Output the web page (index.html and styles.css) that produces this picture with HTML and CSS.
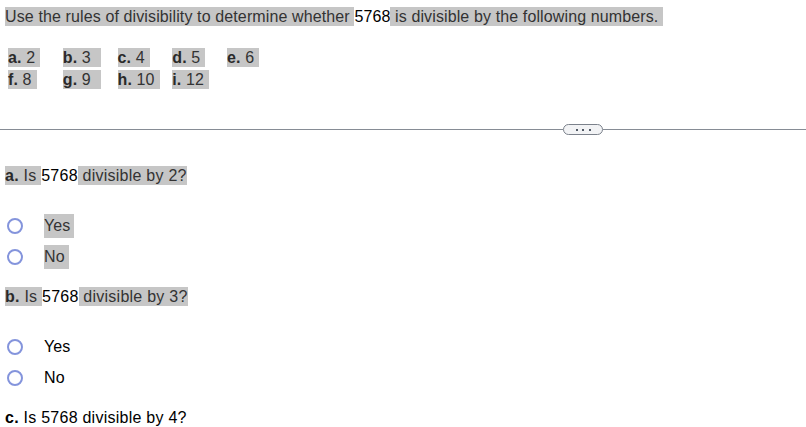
FILE: index.html
```html
<!DOCTYPE html>
<html>
<head>
<meta charset="utf-8">
<link rel="stylesheet" href="styles.css">
</head>
<body>
<div class="page">
  <p class="intro"><span class="hl">Use the rules of divisibility to determine whether </span><span class="num">5768</span><span class="hl end"> is divisible by the following numbers.</span></p>

  <div class="choices">
    <span class="cell"><span class="hl item"><b>a.</b> 2</span></span>
    <span class="cell"><span class="hl item wide"><b>b.</b> 3</span></span>
    <span class="cell"><span class="hl item"><b>c.</b> 4</span></span>
    <span class="cell"><span class="hl item"><b>d.</b> 5</span></span>
    <span class="cell"><span class="hl item"><b>e.</b> 6</span></span>
    <span class="cell"><span class="hl item"><b>f.</b> 8</span></span>
    <span class="cell"><span class="hl item wide"><b>g.</b> 9</span></span>
    <span class="cell"><span class="hl item"><b>h.</b> 10</span></span>
    <span class="cell"><span class="hl item"><b>i.</b> 12</span></span>
  </div>

  <div class="divider">
    <div class="rule"></div>
    <div class="pill"><i></i><i></i><i></i></div>
    <div class="rule rule-right"></div>
  </div>

  <div class="question">
    <p class="qtext"><span class="hl"><b>a.</b> Is </span><span class="num">5768</span><span class="hl"> divisible by 2?</span></p>
    <div class="options">
      <label class="option"><span class="radio"></span><span class="hl opt">Yes</span></label>
      <label class="option"><span class="radio"></span><span class="hl opt">No</span></label>
    </div>
  </div>

  <div class="question">
    <p class="qtext"><span class="hl"><b>b.</b> Is </span><span class="num">5768</span><span class="hl"> divisible by 3?</span></p>
    <div class="options">
      <label class="option"><span class="radio"></span><span class="opt plain">Yes</span></label>
      <label class="option"><span class="radio"></span><span class="opt plain">No</span></label>
    </div>
  </div>

  <div class="question">
    <p class="qtext plaintext"><b>c.</b> Is 5768 divisible by 4?</p>
  </div>
</div>
</body>
</html>
```

FILE: styles.css
```css
html, body {
  margin: 0;
  padding: 0;
  background: #ffffff;
}

body {
  font-family: "Liberation Sans", Arial, sans-serif;
  font-size: 16px;
  letter-spacing: 0.12px;
  color: #000;
  overflow: hidden;
}

.page {
  width: 806px;
}

.hl {
  background: #c6c6c6;
  color: #333333;
  padding: 1px 0;
}

.hl b {
  color: #2a2a2a;
}

.num {
  color: #000;
}

.end {
  padding-right: 5px;
}

.intro {
  margin: 0;
  padding: 6px 0 0 5px;
  line-height: 22px;
}

.choices {
  margin-top: 19px;
  padding-left: 8px;
  display: grid;
  grid-template-columns: repeat(5, 54.75px);
  line-height: 22px;
}

.cell {
  white-space: nowrap;
}

.item {
  padding: 1px 5px 1px 0;
}

.item.wide {
  padding-right: 10px;
}

.divider {
  margin-top: 33px;
  height: 11px;
  display: flex;
  align-items: center;
}

.rule {
  flex: 1;
  height: 1px;
  background: #868c95;
}

.rule-right {
  flex: 0 0 203px;
}

.pill {
  box-sizing: border-box;
  width: 40px;
  height: 11px;
  border: 1px solid #7b818b;
  border-radius: 6px;
  background: #f2f3f5;
  display: flex;
  align-items: center;
  justify-content: center;
  gap: 4.5px;
}

.pill i {
  display: block;
  width: 2px;
  height: 2px;
  background: #515965;
}

.question {
  padding-left: 5px;
  margin-top: 30px;
}

.question + .question {
  margin-top: 18px;
}

.qtext {
  margin: 0;
  line-height: 22px;
  white-space: nowrap;
  letter-spacing: 0.25px;
}

.plaintext {
  color: #000;
}

.options {
  margin-top: 28px;
  display: flex;
  flex-direction: column;
  gap: 9px;
}

.option {
  display: flex;
  align-items: center;
  height: 22px;
  padding-left: 2px;
}

.radio {
  box-sizing: border-box;
  width: 16px;
  height: 16px;
  border: 2px solid #8494dc;
  border-radius: 50%;
  background: #fff;
  flex: 0 0 16px;
}

.opt {
  margin-left: 21px;
  line-height: 22px;
}

.hl.opt {
  padding: 1px 4px 1px 0;
}

.plain {
  color: #000;
}
```
